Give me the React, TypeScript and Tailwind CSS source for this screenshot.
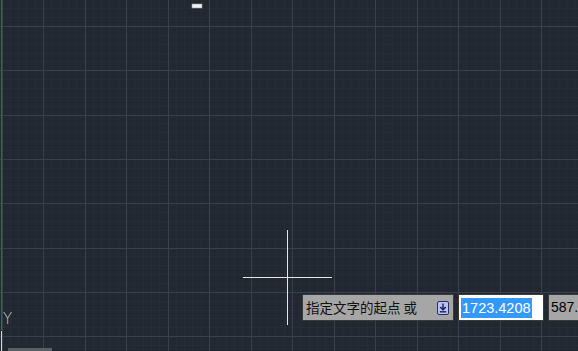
import React from "react";

const W = 578;
const H = 351;

function Grid() {
  const vMajor: number[] = [];
  const vMinor: number[] = [];
  const sx = 41.5;
  for (let i = -1; i < 16; i++) {
    const base = 1.5 + sx * i;
    if (base >= 0 && base <= W) vMajor.push(Math.round(base) + 0.5);
    for (let k = 1; k < 5; k++) {
      const m = base + (sx * k) / 5;
      if (m >= 0 && m <= W) vMinor.push(Math.round(m) + 0.5);
    }
  }
  const hMajor: number[] = [];
  const hMinor: number[] = [];
  const sy = 44.3;
  for (let i = -1; i < 10; i++) {
    const base = 26 + sy * i;
    if (base >= 0 && base <= H) hMajor.push(Math.round(base) + 0.5);
    for (let k = 1; k < 5; k++) {
      const m = base + (sy * k) / 5;
      if (m >= 0 && m <= H) hMinor.push(Math.round(m) + 0.5);
    }
  }
  return (
    <svg className="absolute inset-0" width={W} height={H} viewBox={`0 0 ${W} ${H}`}>
      <rect width={W} height={H} fill="#212832" />
      {vMinor.map((x, i) => (
        <line key={"vm" + i} x1={x} y1={0} x2={x} y2={H} stroke="#262d37" strokeWidth={1} />
      ))}
      {hMinor.map((y, i) => (
        <line key={"hm" + i} x1={0} y1={y} x2={W} y2={y} stroke="#262d37" strokeWidth={1} />
      ))}
      {vMajor.map((x, i) => (
        <line key={"vM" + i} x1={x} y1={0} x2={x} y2={H} stroke="#37404c" strokeWidth={1} />
      ))}
      {hMajor.map((y, i) => (
        <line key={"hM" + i} x1={0} y1={y} x2={W} y2={y} stroke="#37404c" strokeWidth={1} />
      ))}
      {/* UCS Y axis (green) */}
      <line x1={1.5} y1={0} x2={1.5} y2={330} stroke="#3d6b4a" strokeWidth={1} />
      <line x1={1.5} y1={331} x2={1.5} y2={H} stroke="#d8d8d8" strokeWidth={1} />
      <rect x={8} y={348} width={44} height={3} fill="#5a5f66" />
      {/* top marker */}
      <rect x={192} y={4} width={10} height={4} fill="#f2f2f2" stroke="#9aa0a8" strokeWidth={0.6} />
      {/* crosshair */}
      <line x1={287.5} y1={230} x2={287.5} y2={325} stroke="#e6e6e6" strokeWidth={1} />
      <line x1={243} y1={277.5} x2={332} y2={277.5} stroke="#e6e6e6" strokeWidth={1} />
    </svg>
  );
}

export default function App() {
  return (
    <div className="relative w-[578px] h-[351px] overflow-hidden bg-[#212832]">
      <Grid />
      <div
        className="absolute left-[3px] top-[312px] text-[15px] leading-none text-[#c9c9c9]"
        style={{ fontFamily: '"DejaVu Sans", sans-serif', fontWeight: 200 }}
      >
        Y
      </div>
      <div className="absolute left-[302px] top-[294px] flex h-[27px] items-center gap-[4px]">
        <div
          className="flex h-[27px] w-[152px] items-center justify-between border border-[#3a3a3a] bg-[#a6a6a6] pl-[3px] pr-[4px] text-[13.5px] text-[#111]"
          style={{ fontFamily: '"Noto Sans CJK SC", "Noto Sans", sans-serif' }}
        >
          <span className="whitespace-pre">指定文字的起点 或</span>
          <span className="flex h-[14px] w-[12px] items-center justify-center rounded-[2px] border border-[#2b2f6b] bg-[#b9c3f2]">
            <svg width="8" height="10" viewBox="0 0 8 10">
              <path d="M4 0.5V6.5M1.2 4L4 6.8L6.8 4" stroke="#1c1f55" strokeWidth="1.4" fill="none" />
              <path d="M0.8 8.8H7.2" stroke="#1c1f55" strokeWidth="1.4" />
            </svg>
          </span>
        </div>
        <div
          className="flex h-[27px] w-[86px] items-center border border-[#3a3a3a] bg-white pl-[2px] text-[14.5px]"
          style={{ fontFamily: '"Liberation Sans", Arial, sans-serif' }}
        >
          <span className="bg-[#3399ff] px-[1px] leading-[20px] text-white">1723.4208</span>
        </div>
        <div
          className="flex h-[27px] w-[60px] shrink-0 items-center border border-[#3a3a3a] bg-[#a6a6a6] pl-[2px] text-[14px] text-black"
          style={{ fontFamily: '"Liberation Sans", Arial, sans-serif' }}
        >
          587.
        </div>
      </div>
    </div>
  );
}
